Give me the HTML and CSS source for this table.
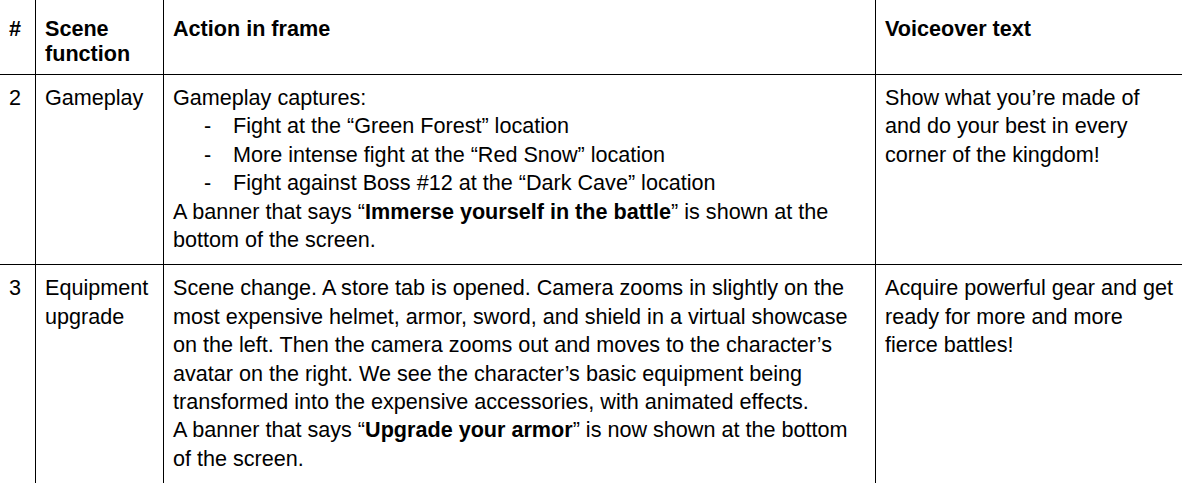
FILE: index.html
```html
<!DOCTYPE html>
<html lang="en">
<head>
<meta charset="utf-8">
<title>Script table</title>
<link rel="stylesheet" href="styles.css">
</head>
<body>
<table class="script">
  <colgroup>
    <col class="c-num">
    <col class="c-func">
    <col class="c-action">
    <col class="c-voice">
  </colgroup>
  <thead>
    <tr>
      <th>#</th>
      <th>Scene function</th>
      <th>Action in frame</th>
      <th>Voiceover text</th>
    </tr>
  </thead>
  <tbody>
    <tr>
      <td>2</td>
      <td>Gameplay</td>
      <td>
        <p>Gameplay captures:</p>
        <ul class="dash-list">
          <li><span class="dash">-</span><span>Fight at the “Green Forest” location</span></li>
          <li><span class="dash">-</span><span>More intense fight at the “Red Snow” location</span></li>
          <li><span class="dash">-</span><span>Fight against Boss #12 at the “Dark Cave” location</span></li>
        </ul>
        <p>A banner that says “<b>Immerse yourself in the battle</b>” is shown at the bottom of the screen.</p>
      </td>
      <td>Show what you’re made of and do your best in every corner of the kingdom!</td>
    </tr>
    <tr>
      <td>3</td>
      <td>Equipment upgrade</td>
      <td>
        <p>Scene change. A store tab is opened. Camera zooms in slightly on the most expensive helmet, armor, sword, and shield in a virtual showcase on the left. Then the camera zooms out and moves to the character’s avatar on the right. We see the character’s basic equipment being transformed into the expensive accessories, with animated effects.</p>
        <p>A banner that says “<b>Upgrade your armor</b>” is now shown at the bottom of the screen.</p>
      </td>
      <td>Acquire powerful gear and get ready for more and more fierce battles!</td>
    </tr>
  </tbody>
</table>
</body>
</html>
```

FILE: styles.css
```css
html, body {
  margin: 0;
  padding: 0;
  background: #ffffff;
  overflow: hidden;
}

body {
  font-family: "Liberation Sans", Arial, sans-serif;
  font-size: 21.6px;
  color: #000000;
}

.script {
  border-collapse: collapse;
  table-layout: fixed;
  width: 1190px;
  margin-left: -2px;
  margin-top: -1px;
}

.c-num { width: 37px; }
.c-func { width: 128px; }
.c-action { width: 712px; }
.c-voice { width: 313px; }

.script th,
.script td {
  border: 1px solid #000000;
  text-align: left;
  vertical-align: top;
  padding: 9px 9px 10px 9px;
  line-height: 28.4px;
}

.script th {
  font-weight: bold;
  line-height: 24.5px;
  padding-top: 17px;
  padding-bottom: 8px;
}

.script th:first-child,
.script td:first-child {
  padding-left: 10px;
}

.script p {
  margin: 0;
}

.dash-list {
  list-style: none;
  margin: 0;
  padding: 0;
}

.dash-list li {
  display: flex;
}

.dash {
  width: 29px;
  padding-left: 31px;
  flex: none;
}
```
